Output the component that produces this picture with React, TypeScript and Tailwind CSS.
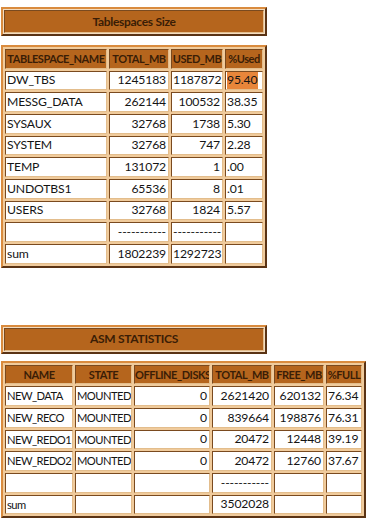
import React from "react";

const cellBase =
  "border border-t-[#7a4a1f] border-l-[#7a4a1f] border-r-[#e3bd8c] border-b-[#e3bd8c] bg-white px-[1px] h-[19.67px] leading-none text-[#141414] whitespace-nowrap overflow-hidden";
const cell = `${cellBase} text-[12.2px] tracking-[-0.15px]`;
const cellTight = `${cellBase} text-[11.2px] tracking-[-0.55px]`;
const head =
  "border border-t-[#7a4a1f] border-l-[#7a4a1f] border-r-[#e3bd8c] border-b-[#e3bd8c] bg-[#b5651d] px-0 h-[19.67px] text-[11px] tracking-[-0.45px] leading-none font-bold text-[#3a1d06] text-center whitespace-nowrap overflow-hidden";
const tableCls =
  "table-fixed border-separate border-spacing-[2px] border-2 border-t-[#d98b3e] border-l-[#d98b3e] border-r-[#5a3314] border-b-[#5a3314] bg-[#f0cb9c]";

function Title({ text }: { text: string }) {
  return (
    <div className="w-[266px] h-[29px] border-2 border-t-[#d98b3e] border-l-[#d98b3e] border-r-[#5a3314] border-b-[#5a3314] bg-[#f3dcc0] p-[1px]">
      <div className="h-full bg-[#b5651d] border border-t-[#7a4a1f] border-l-[#7a4a1f] border-r-[#e3bd8c] border-b-[#e3bd8c] flex items-center justify-center text-[12px] tracking-[-0.3px] font-bold text-[#3a1d06]">
        {text}
      </div>
    </div>
  );
}

const t1Rows: [string, string, string, string][] = [
  ["DW_TBS", "1245183", "1187872", "95.40"],
  ["MESSG_DATA", "262144", "100532", "38.35"],
  ["SYSAUX", "32768", "1738", "5.30"],
  ["SYSTEM", "32768", "747", "2.28"],
  ["TEMP", "131072", "1", ".00"],
  ["UNDOTBS1", "65536", "8", ".01"],
  ["USERS", "32768", "1824", "5.57"],
  ["", "-----------", "-----------", ""],
  ["sum", "1802239", "1292723", ""],
];

const t2Rows: string[][] = [
  ["NEW_DATA", "MOUNTED", "0", "2621420", "620132", "76.34"],
  ["NEW_RECO", "MOUNTED", "0", "839664", "198876", "76.31"],
  ["NEW_REDO1", "MOUNTED", "0", "20472", "12448", "39.19"],
  ["NEW_REDO2", "MOUNTED", "0", "20472", "12760", "37.67"],
  ["", "", "", "-----------", "", ""],
  ["sum", "", "", "3502028", "", ""],
];

function t2Class(j: number) {
  if (j === 0 || j === 1) return `${cellTight} text-left`;
  if (j === 5) return `${cell} text-left`;
  return `${cell} text-right pr-[2px]`;
}

export default function App() {
  return (
    <div className="w-[368px] h-[518px] bg-white overflow-hidden font-['Lato','Liberation_Sans',sans-serif]">
      <div className="pt-[7px] pl-[1px]">
        <Title text="Tablespaces Size" />
        <table className={`${tableCls} mt-[9px] w-[266px]`}>
          <thead>
            <tr>
              <th className={`${head} w-[102px]`}>TABLESPACE_NAME</th>
              <th className={`${head} w-[60px]`}>TOTAL_MB</th>
              <th className={`${head} w-[52px]`}>USED_MB</th>
              <th className={`${head} w-[38px]`}>%Used</th>
            </tr>
          </thead>
          <tbody>
            {t1Rows.map((r, i) => (
              <tr key={i}>
                <td className={`${cell} text-left`}>{r[0]}</td>
                <td className={`${cell} text-right pr-[2px]`}>{r[1]}</td>
                <td className={`${cell} text-right pr-[2px]`}>{r[2]}</td>
                <td className={`${cell} text-left`}>
                  {i === 0 ? (
                    <span className="inline-flex items-center h-[17px] bg-[#e8863a] pr-[1px]">{r[3]}</span>
                  ) : (
                    r[3]
                  )}
                </td>
              </tr>
            ))}
          </tbody>
        </table>

        <div className="mt-[57px]">
          <Title text="ASM STATISTICS" />
        </div>
        <table className={`${tableCls} mt-[7px] w-[365px]`}>
          <thead>
            <tr>
              <th className={`${head} w-[68px]`}>NAME</th>
              <th className={`${head} w-[57px]`}>STATE</th>
              <th className={`${head} w-[76px]`}>OFFLINE_DISKS</th>
              <th className={`${head} w-[60px]`}>TOTAL_MB</th>
              <th className={`${head} w-[50px]`}>FREE_MB</th>
              <th className={`${head} w-[36px]`}>%FULL</th>
            </tr>
          </thead>
          <tbody>
            {t2Rows.map((r, i) => (
              <tr key={i}>
                {r.map((v, j) => (
                  <td key={j} className={t2Class(j)}>
                    {v}
                  </td>
                ))}
              </tr>
            ))}
          </tbody>
        </table>
      </div>
    </div>
  );
}
